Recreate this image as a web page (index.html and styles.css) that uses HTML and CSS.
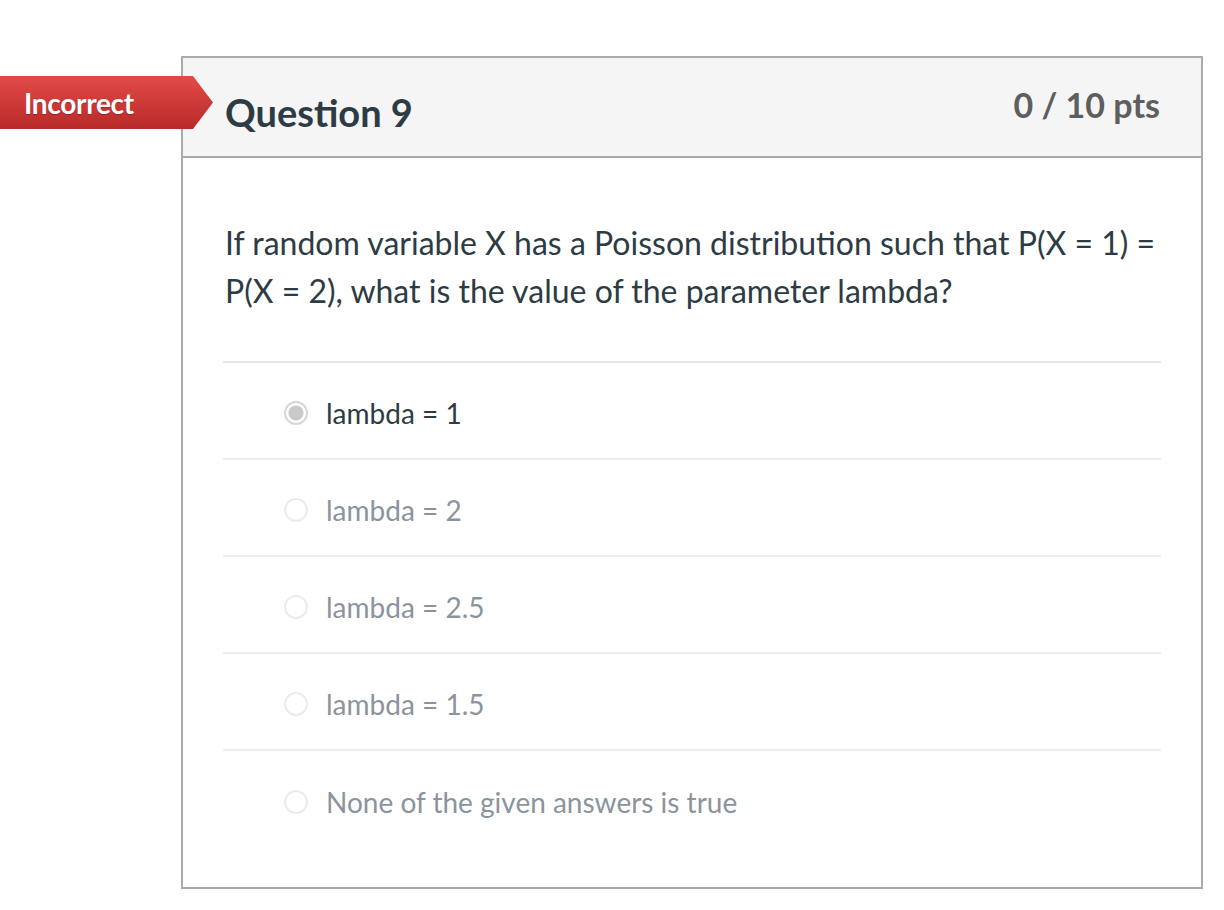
FILE: index.html
```html
<!DOCTYPE html>
<html>
<head>
<meta charset="utf-8">
<link rel="stylesheet" href="styles.css">
</head>
<body>
<div class="page">
  <div class="question">
    <div class="badge"><span class="badge-text">Incorrect</span></div>
    <div class="q-header">
      <h2 class="q-title">Question 9</h2>
      <div class="q-pts">0 / 10 pts</div>
    </div>
    <div class="q-body">
      <p class="q-text">If random variable X has a Poisson distribution such that P(X = 1) = P(X = 2), what is the value of the parameter lambda?</p>
      <div class="answers">
        <div class="answer selected"><span class="radio"></span><span class="label">lambda = 1</span></div>
        <div class="answer"><span class="radio"></span><span class="label">lambda = 2</span></div>
        <div class="answer"><span class="radio"></span><span class="label">lambda = 2.5</span></div>
        <div class="answer"><span class="radio"></span><span class="label">lambda = 1.5</span></div>
        <div class="answer last"><span class="radio"></span><span class="label">None of the given answers is true</span></div>
      </div>
    </div>
  </div>
</div>
</body>
</html>
```
FILE: styles.css
```css
* { box-sizing: border-box; }
html, body { margin: 0; padding: 0; background: #fff; }
body { font-family: Lato, "Noto Sans", sans-serif; color: #2d3b45; }
.page { padding: 56px 0 0 181px; width: 1224px; height: 910px; }
.question { position: relative; width: 1022px; border: 2px solid #aaaaaa; }
.badge {
  position: absolute; left: -183px; top: 18px; width: 213px; height: 53px;
  background: linear-gradient(#e24a48, #b82a28);
  clip-path: polygon(0 0, 193px 0, 213px 50%, 193px 100%, 0 100%);
  display: flex; align-items: center;
}
.badge-text { color: #fff; font-weight: 700; font-size: 28px; margin-left: 24px; letter-spacing: -0.3px; text-shadow: 0 1px 1px rgba(0,0,0,0.25); }
.q-header {
  background: #f5f5f5; border-bottom: 2px solid #aaaaaa; height: 100px;
  display: flex; justify-content: space-between; align-items: flex-start;
  padding: 0 41px 0 42px;
}
.q-title { margin: 30px 0 0; font-size: 38px; font-weight: 700; color: #2d3b45; line-height: 48px; }
.q-pts { margin-top: 26px; font-size: 34px; font-weight: 700; color: #5e5e5e; line-height: 42px; }
.q-body { padding: 61px 40px 38px 40px; }
.q-text { margin: 0 0 46px; font-size: 32px; line-height: 48px; color: #2d3b45; padding-left: 2px; }
.answers { border-top: 2px solid #e6e6e6; }
.answer { display: flex; align-items: center; height: 97px; padding-top: 4px; border-bottom: 2px solid #eeeeee; padding-left: 61px; }
.answer.last { border-bottom: none; height: 98px; }
.radio { width: 24px; height: 24px; border-radius: 50%; border: 2px solid #ececec; background: #fff; margin-right: 18px; flex: none; }
.answer.selected .radio { border-color: #d8d8d8; background: radial-gradient(circle, #c9c9c9 0 7px, #fff 8px); }
.label { font-size: 28px; color: #8b949c; }
.answer.selected .label { color: #2d3b45; }
```
